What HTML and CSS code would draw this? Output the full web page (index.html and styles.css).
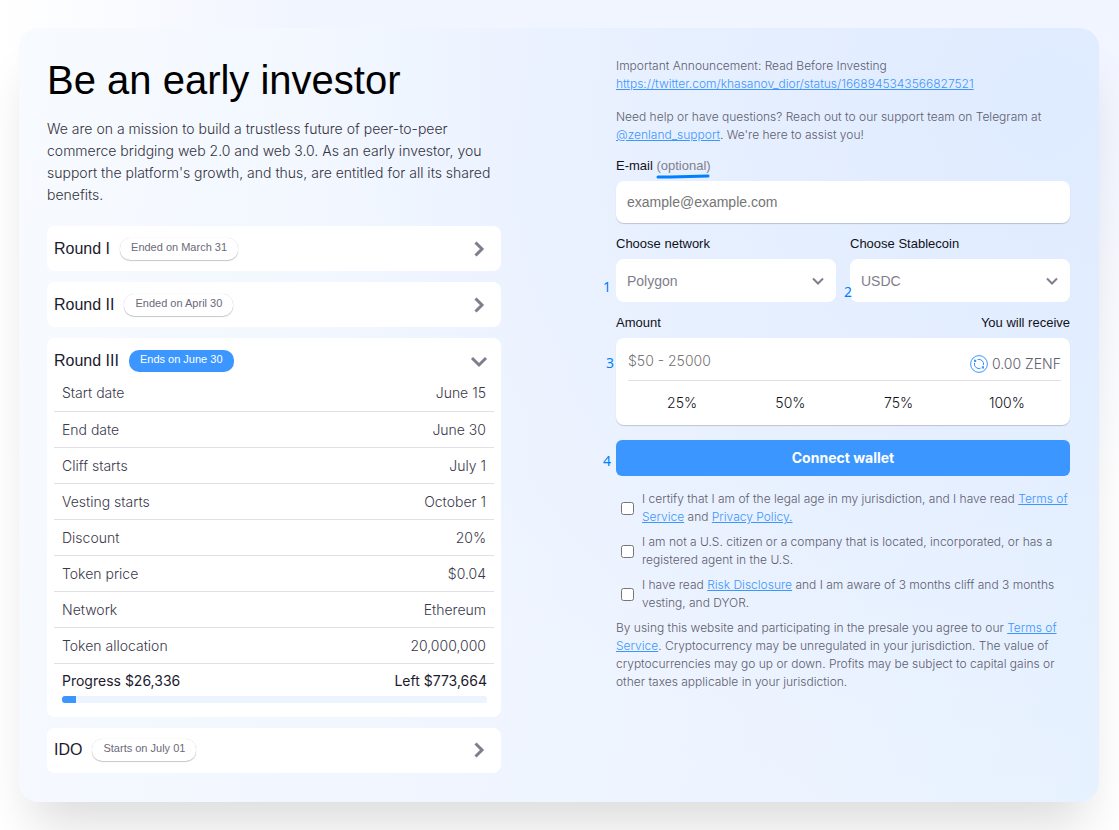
FILE: index.html
```html
<!DOCTYPE html>
<html lang="en">

<head>
    <meta charset="UTF-8">
    <meta name="viewport" content="width=device-width, initial-scale=1.0">
    <title>Be an early investor</title>
    <link rel="stylesheet" href="styles.css">
</head>

<body>
    <main class="card">
        <section class="about">
            <h1>Be an early investor</h1>
            <p class="intro">We are on a mission to build a trustless future of peer-to-peer commerce bridging web 2.0 and web 3.0. As an early investor, you support the platform's growth, and thus, are entitled for all its shared benefits.</p>

            <div class="rounds">
                <div class="round">
                    <button class="round-head" type="button">
                        <span class="round-name">Round I</span>
                        <span class="badge">Ended on March 31</span>
                        <svg class="arrow" width="18" height="18" viewBox="0 0 18 18"><path d="M5.500 2.500L12 9L5.500 15.500" /></svg>
                    </button>
                </div>
                <div class="round">
                    <button class="round-head" type="button">
                        <span class="round-name">Round II</span>
                        <span class="badge">Ended on April 30</span>
                        <svg class="arrow" width="18" height="18" viewBox="0 0 18 18"><path d="M5.500 2.500L12 9L5.500 15.500" /></svg>
                    </button>
                </div>
                <div class="round">
                    <button class="round-head" type="button" aria-expanded="true">
                        <span class="round-name">Round III</span>
                        <span class="badge active">Ends on June 30</span>
                        <svg class="arrow" width="18" height="18" viewBox="0 0 18 18"><path d="M2 6L9 13L16 6" /></svg>
                    </button>
                    <table class="details">
                        <tr>
                            <td>Start date</td>
                            <td>June 15</td>
                        </tr>
                        <tr>
                            <td>End date</td>
                            <td>June 30</td>
                        </tr>
                        <tr>
                            <td>Cliff starts</td>
                            <td>July 1</td>
                        </tr>
                        <tr>
                            <td>Vesting starts</td>
                            <td>October 1</td>
                        </tr>
                        <tr>
                            <td>Discount</td>
                            <td>20%</td>
                        </tr>
                        <tr>
                            <td>Token price</td>
                            <td>$0.04</td>
                        </tr>
                        <tr>
                            <td>Network</td>
                            <td>Ethereum</td>
                        </tr>
                        <tr>
                            <td>Token allocation</td>
                            <td>20,000,000</td>
                        </tr>
                    </table>
                    <div class="progress">
                        <div class="progress-text">
                            <span>Progress $26,336</span>
                            <span>Left $773,664</span>
                        </div>
                        <div class="bar">
                            <div class="bar-fill" style="width: 3.3%"></div>
                        </div>
                    </div>
                </div>
                <div class="round">
                    <button class="round-head" type="button">
                        <span class="round-name">IDO</span>
                        <span class="badge">Starts on July 01</span>
                        <svg class="arrow" width="18" height="18" viewBox="0 0 18 18"><path d="M5.500 2.500L12 9L5.500 15.500" /></svg>
                    </button>
                </div>
            </div>
        </section>

        <form class="invest">
            <div class="notes">
                <p>Important Announcement: Read Before Investing<br>
                    <a href="#">https://twitter.com/khasanov_dior/status/1668945343566827521</a></p>
                <p>Need help or have questions? Reach out to our support team on Telegram at <a href="#">@zenland_support</a>. We're here to assist you!</p>
            </div>

            <div class="field">
                <label for="email">E-mail <span class="optional">(optional)<svg class="stroke" width="54" height="6" viewBox="0 0 54 6"><path d="M2 4L14 4L52 3" /></svg></span></label>
                <input id="email" class="box" type="email" placeholder="example@example.com">
            </div>

            <div class="pair">
                <div class="field">
                    <label for="network">Choose network</label>
                    <div class="select">
                        <span class="mark mark-1">1</span>
                        <select id="network" class="box">
                            <option>Polygon</option>
                        </select>
                        <svg width="12" height="12" viewBox="0 0 12 12"><path d="M1 3.500L6 8.500L11 3.500" /></svg>
                    </div>
                </div>
                <div class="field">
                    <label for="coin">Choose Stablecoin</label>
                    <div class="select">
                        <span class="mark mark-2">2</span>
                        <select id="coin" class="box">
                            <option>USDC</option>
                        </select>
                        <svg width="12" height="12" viewBox="0 0 12 12"><path d="M1 3.500L6 8.500L11 3.500" /></svg>
                    </div>
                </div>
            </div>

            <div class="field">
                <div class="labels">
                    <label for="amount">Amount</label>
                    <span>You will receive</span>
                </div>
                <div class="amount">
                    <span class="mark mark-3">3</span>
                    <div class="amount-top">
                        <input id="amount" type="text" placeholder="$50 - 25000">
                        <span class="receive">
                            <svg width="18" height="18" viewBox="0 0 18 18">
                                <circle cx="9" cy="9" r="8.400" />
                                <path d="M7.500 4.600A4.700 4.700 0 0 1 13.500 10.200M10.500 13.400A4.700 4.700 0 0 1 4.500 7.800" />
                                <path class="dot" d="M4 4.800h2.200v2.200H4zM11.800 11.200h2.200v2.200h-2.200z" />
                            </svg>
                            0.00 ZENF
                        </span>
                    </div>
                    <div class="percents">
                        <button type="button">25%</button>
                        <button type="button">50%</button>
                        <button type="button">75%</button>
                        <button type="button">100%</button>
                    </div>
                </div>
            </div>

            <div class="submit">
                <span class="mark mark-4">4</span>
                <button class="connect" type="button">Connect wallet</button>
            </div>

            <div class="checks">
                <div class="check">
                    <input id="age" type="checkbox">
                    <label for="age">I certify that I am of the legal age in my jurisdiction, and I have read <a href="#">Terms of Service</a> and <a href="#">Privacy Policy.</a></label>
                </div>
                <div class="check">
                    <input id="citizen" type="checkbox">
                    <label for="citizen">I am not a U.S. citizen or a company that is located, incorporated, or has a registered agent in the U.S.</label>
                </div>
                <div class="check">
                    <input id="risk" type="checkbox">
                    <label for="risk">I have read <a href="#">Risk Disclosure</a> and I am aware of 3 months cliff and 3 months vesting, and DYOR.</label>
                </div>
                <p class="terms">By using this website and participating in the presale you agree to our <a href="#">Terms of Service</a>. Cryptocurrency may be unregulated in your jurisdiction. The value of cryptocurrencies may go up or down. Profits may be subject to capital gains or other taxes applicable in your jurisdiction.</p>
            </div>
        </form>
    </main>
</body>

</html>
```
FILE: styles.css
```css
* {
    box-sizing: border-box;
}

body {
    margin: 0;
    font-family: Inter, "Liberation Sans", Arial, sans-serif;
    font-size: 14px;
    font-weight: 300;
    color: #1c1b2e;
    background: linear-gradient(to right, #ffffff 0, #ffffff00 300px), linear-gradient(#f1f5ff 0, #f3f6ff 150px, #ffffff 500px);
}

h1,
p {
    margin: 0;
}

button,
input,
select {
    font: inherit;
    color: inherit;
}

button {
    cursor: pointer;
    border: 0;
    padding: 0;
    background: none;
}

a {
    color: #3c96ff;
}

.card {
    display: grid;
    grid-template-columns: 1fr 1fr;
    gap: 115px;
    margin: 28px 20px 28px 19px;
    padding: 28px 29px 29px 28px;
    border-radius: 20px;
    background: radial-gradient(circle at 95% 10%, #dfebff 0, #dfebff00 60%), linear-gradient(100deg, #f7fbff 0%, #f0f5ff 45%, #edf4ff 75%, #e7f2ff 100%);
    box-shadow: 0 36px 50px -14px #00000024;
}

/* left side */
h1,
.round-name,
.badge {
    font-family: "Liberation Sans", Arial, sans-serif;
    font-weight: 400;
}

h1 {
    font-size: 40px;
    line-height: 48px;
    color: #000000;
}

.intro {
    margin-top: 14px;
    line-height: 22px;
    color: #333340;
}

.rounds {
    display: flex;
    flex-direction: column;
    gap: 11px;
    margin-top: 20px;
}

.round {
    padding: 11px 7px;
    border-radius: 8px;
    background: #ffffff;
}

.round-head {
    display: flex;
    align-items: center;
    width: 100%;
    height: 23px;
}

.round-name {
    font-size: 16px;
}

.badge {
    height: 22px;
    margin-left: 10px;
    padding: 0 11px;
    border-radius: 10px;
    font-size: 11px;
    line-height: 19px;
    color: #6b6a7a;
    box-shadow: 0 0 1px #00000033, 0 1px 1px #00000033;
}

.badge.active {
    color: #ffffff;
    background: #3c96ff;
    box-shadow: none;
}

.arrow {
    margin-left: auto;
    margin-right: 6px;
}

.arrow path {
    fill: none;
    stroke: #7f7e8c;
    stroke-width: 3;
}

.details {
    width: 100%;
    margin-top: 3px;
    border-collapse: collapse;
}

.details td {
    height: 36px;
    padding: 0 8px;
    border-bottom: 1px solid #e0e0e4;
    color: #3a394a;
}

.details td:last-child {
    text-align: right;
}

.progress {
    padding: 8px 7px 3px 8px;
}

.progress-text {
    display: flex;
    justify-content: space-between;
    line-height: 18px;
    font-weight: 400;
}

.bar {
    height: 7px;
    margin-top: 6px;
    border-radius: 3px;
    overflow: hidden;
    background: #ecf4ff;
}

.bar-fill {
    height: 100%;
    background: #3c96ff;
}

/* right side */
.invest {
    font-size: 13px;
    line-height: 18px;
}

.notes,
.checks {
    display: flex;
    flex-direction: column;
    font-size: 12px;
    color: #5e5d6e;
}

.notes {
    gap: 15px;
    padding-top: 1px;
    margin-bottom: 13px;
}

.field {
    display: flex;
    flex-direction: column;
    gap: 6px;
    margin-bottom: 12px;
    font-family: "Liberation Sans", Arial, sans-serif;
    font-weight: 400;
    color: #111118;
}

.optional {
    position: relative;
    color: #7f7e8c;
}

.stroke {
    position: absolute;
    left: 0;
    bottom: -6px;
}

.stroke path {
    fill: none;
    stroke: #007fff;
    stroke-width: 3;
    stroke-linecap: round;
}

.box {
    width: 100%;
    height: 42px;
    padding: 0 11px;
    border: 0;
    border-radius: 8px;
    font-size: 14px;
    color: #7f7e8c;
    background: #ffffff;
    box-shadow: 0 1px 1px #00000030;
}

input::placeholder {
    color: #757575;
}

.pair {
    display: grid;
    grid-template-columns: 1fr 1fr;
    gap: 14px;
}

.select {
    position: relative;
}

.select .box {
    display: block;
    height: 43px;
    appearance: none;
    box-shadow: none;
}

.select svg {
    position: absolute;
    right: 12px;
    top: 16px;
    pointer-events: none;
}

.select path {
    fill: none;
    stroke: #7f7e8c;
    stroke-width: 2;
}

.labels {
    display: flex;
    justify-content: space-between;
}

.amount {
    position: relative;
    padding: 0 9px 0 12px;
    border-radius: 8px;
    font-family: Inter, "Liberation Sans", Arial, sans-serif;
    font-size: 14px;
    font-weight: 300;
    background: #ffffff;
    box-shadow: 0 1px 1px #00000030;
}

.amount-top {
    display: flex;
    align-items: center;
    height: 43px;
    padding-top: 4px;
    border-bottom: 1px solid #e0e0e4;
}

.amount-top input {
    flex: 1;
    min-width: 0;
    padding: 0;
    border: 0;
    background: none;
}

.receive {
    display: flex;
    align-items: center;
    gap: 4px;
    padding-top: 6px;
    color: #5e5d6e;
}

.receive svg {
    fill: none;
    stroke: #3c96ff;
    stroke-width: 1;
}

.receive .dot {
    fill: #3c96ff;
    stroke: none;
}

.percents {
    display: grid;
    grid-template-columns: repeat(4, 1fr);
    height: 44px;
}

.submit {
    position: relative;
    margin: 15px 0 14px;
}

.connect {
    display: block;
    width: 100%;
    height: 36px;
    border-radius: 6px;
    font-size: 14px;
    font-weight: 700;
    color: #ffffff;
    background: #3c96ff;
}

.checks {
    gap: 7px;
}

.check {
    display: flex;
    align-items: center;
}

.check input {
    flex: none;
    width: 13px;
    height: 13px;
    margin: 0 8px 0 5px;
}

/* step numbers over the form */
.mark {
    position: absolute;
    z-index: 1;
    font-family: "Noto Sans", "Open Sans", sans-serif;
    font-size: 14px;
    font-weight: 400;
    color: #007fff;
}

.mark-1 {
    left: -13px;
    top: 19px;
}

.mark-2 {
    left: -6px;
    top: 24px;
}

.mark-3 {
    left: -10px;
    top: 16px;
}

.mark-4 {
    left: -13px;
    top: 12px;
}
```
